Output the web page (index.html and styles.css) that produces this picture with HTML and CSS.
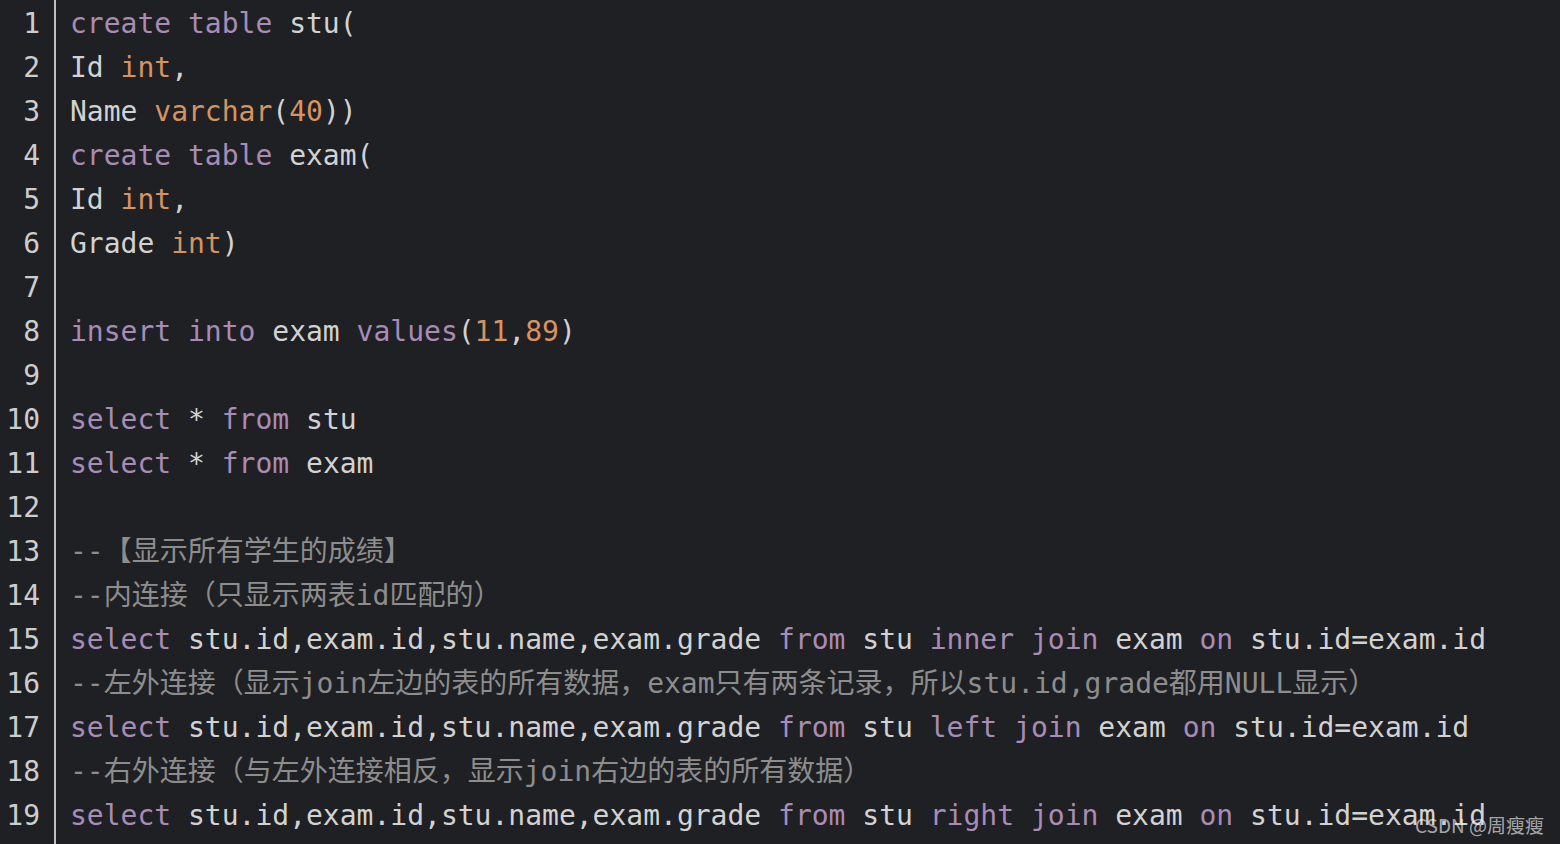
FILE: index.html
```html
<!DOCTYPE html>
<html lang="zh-CN">
<head>
<meta charset="utf-8">
<title>SQL</title>
<link rel="stylesheet" href="styles.css">
</head>
<body>
<div class="editor">
  <div class="gutter">
    <div class="ln">1</div><div class="ln">2</div><div class="ln">3</div><div class="ln">4</div><div class="ln">5</div><div class="ln">6</div><div class="ln">7</div><div class="ln">8</div><div class="ln">9</div><div class="ln">10</div><div class="ln">11</div><div class="ln">12</div><div class="ln">13</div><div class="ln">14</div><div class="ln">15</div><div class="ln">16</div><div class="ln">17</div><div class="ln">18</div><div class="ln">19</div>
  </div>
  <div class="code">
    <div class="line"><span class="kw">create table</span> stu(</div>
    <div class="line">Id <span class="ty">int</span>,</div>
    <div class="line">Name <span class="ty">varchar</span>(<span class="ty">40</span>))</div>
    <div class="line"><span class="kw">create table</span> exam(</div>
    <div class="line">Id <span class="ty">int</span>,</div>
    <div class="line">Grade <span class="ty">int</span>)</div>
    <div class="line"></div>
    <div class="line"><span class="kw">insert into</span> exam <span class="kw">values</span>(<span class="ty">11</span>,<span class="ty">89</span>)</div>
    <div class="line"></div>
    <div class="line"><span class="kw">select</span> * <span class="kw">from</span> stu</div>
    <div class="line"><span class="kw">select</span> * <span class="kw">from</span> exam</div>
    <div class="line"></div>
    <div class="line cm">--【显示所有学生的成绩】</div>
    <div class="line cm">--内连接（只显示两表id匹配的）</div>
    <div class="line"><span class="kw">select</span> stu.id,exam.id,stu.name,exam.grade <span class="kw">from</span> stu <span class="kw">inner join</span> exam <span class="kw">on</span> stu.id=exam.id</div>
    <div class="line cm">--左外连接（显示join左边的表的所有数据，exam只有两条记录，所以stu.id,grade都用NULL显示）</div>
    <div class="line"><span class="kw">select</span> stu.id,exam.id,stu.name,exam.grade <span class="kw">from</span> stu <span class="kw">left join</span> exam <span class="kw">on</span> stu.id=exam.id</div>
    <div class="line cm">--右外连接（与左外连接相反，显示join右边的表的所有数据）</div>
    <div class="line"><span class="kw">select</span> stu.id,exam.id,stu.name,exam.grade <span class="kw">from</span> stu <span class="kw">right join</span> exam <span class="kw">on</span> stu.id=exam.id</div>
  </div>
  <div class="watermark">CSDN @周瘦瘦</div>
</div>
</body>
</html>
```

FILE: styles.css
```css
html, body {
  margin: 0;
  padding: 0;
  background: #1f2023;
  height: 100%;
  overflow: hidden;
}

.editor {
  position: relative;
  display: flex;
  height: 844px;
  background: #1f2023;
  font-family: "DejaVu Sans Mono", "Noto Sans CJK SC", monospace;
  font-size: 28px;
  line-height: 44px;
  color: #d2d2d2;
}

.gutter {
  width: 40px;
  padding-top: 2px;
  padding-right: 14px;
  border-right: 2px solid #bfbfbf;
  text-align: right;
  color: #cdcdcd;
  flex: none;
}

.ln {
  height: 44px;
}

.code {
  padding-top: 2px;
  padding-left: 14px;
  flex: 1;
}

.line {
  height: 44px;
  white-space: pre;
}

.kw {
  color: #a98cb6;
}

.ty {
  color: #d8935f;
}

.cm {
  color: #8d8d8d;
}

.watermark {
  position: absolute;
  right: 16px;
  bottom: 7px;
  font-family: "Noto Sans CJK SC", "Liberation Sans", sans-serif;
  font-size: 19px;
  line-height: 24px;
  color: rgba(255, 255, 255, 0.62);
}
```
